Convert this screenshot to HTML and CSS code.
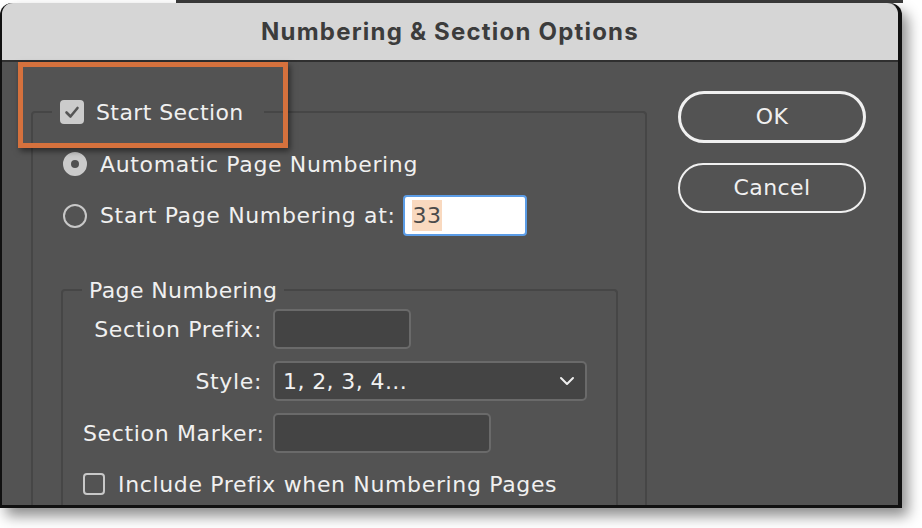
FILE: index.html
```html
<!DOCTYPE html>
<html>
<head>
<meta charset="utf-8">
<link rel="stylesheet" href="styles.css">
</head>
<body>
<div class="backdrop"></div>
<div class="window">
  <div class="titlebar">Numbering &amp; Section Options</div>
  <div class="content">
    <div class="main">
      <div class="group outer">
        <div class="legend outer-legend">
          <span class="check checked">
            <svg width="24" height="24" viewBox="0 0 24 24"><path d="M6.5 12.5 L10.5 16.5 L17.5 8" fill="none" stroke="#555" stroke-width="2.6" stroke-linecap="round" stroke-linejoin="round"/></svg>
          </span>
          <span class="legend-text">Start Section</span>
        </div>
        <div class="options">
          <div class="radio-row first">
            <span class="radio on"><span class="dot"></span></span>
            <span class="radio-label">Automatic Page Numbering</span>
          </div>
          <div class="radio-row second">
            <span class="radio"></span>
            <span class="radio-label">Start Page Numbering at:</span>
            <span class="num-input"><span class="sel">33</span></span>
          </div>
          <div class="group inner">
            <div class="legend inner-legend">Page Numbering</div>
            <div class="field-row prefix-row">
              <span class="field-label">Section Prefix:</span>
              <span class="text-box prefix-box"></span>
            </div>
            <div class="field-row">
              <span class="field-label">Style:</span>
              <span class="text-box select-box">
                <span class="select-text">1, 2, 3, 4...</span>
                <svg class="chev" width="16" height="10" viewBox="0 0 16 10"><polyline points="2,2 8,8 14,2" fill="none" stroke="#eeeeee" stroke-width="2" stroke-linecap="round" stroke-linejoin="round"/></svg>
              </span>
            </div>
            <div class="field-row">
              <span class="field-label">Section Marker:</span>
              <span class="text-box marker-box"></span>
            </div>
            <div class="check-row">
              <span class="check empty"></span>
              <span class="check-label">Include Prefix when Numbering Pages</span>
            </div>
          </div>
        </div>
      </div>
    </div>
    <div class="buttons">
      <div class="btn ok">OK</div>
      <div class="btn cancel">Cancel</div>
    </div>
  </div>
  <div class="highlight"></div>
</div>
</body>
</html>
```
FILE: styles.css
```css
html, body {
  margin: 0;
  padding: 0;
  background: #ffffff;
  width: 922px;
  height: 528px;
  overflow: hidden;
  font-family: "DejaVu Sans", Verdana, sans-serif;
}

.backdrop {
  height: 3px;
  margin-left: 176px;
  width: 727px;
  background: #3a3a3a;
}

.window {
  position: relative;
  width: 896px;
  border-left: 2px solid #111;
  border-right: 4px solid #111;
  border-bottom: 3px solid #111;
  border-radius: 12px 12px 0 0;
  background: #535353;
  box-shadow: 6px 8px 14px rgba(0, 0, 0, 0.45);
}

.titlebar {
  height: 57px;
  line-height: 57px;
  background: #d6d6d6;
  border-radius: 11px 11px 0 0;
  border-bottom: 2px solid #2f2f2f;
  text-align: center;
  font-family: Inter, "DejaVu Sans", sans-serif;
  font-weight: 700;
  font-size: 24px;
  color: #3c3c3c;
  letter-spacing: 1.2px;
}

.content {
  height: 443px;
  overflow: hidden;
  display: flex;
  align-items: flex-start;
  color: #f0f0f0;
  font-size: 22px;
  letter-spacing: 0.65px;
}

.main {
  margin-left: 29px;
  width: 616px;
}

.group {
  border: 2px solid #464646;
  border-bottom: none;
  border-radius: 4px 4px 0 0;
}

.outer {
  margin-top: 49px;
  padding-bottom: 40px;
}

.legend {
  display: flex;
  align-items: center;
  width: fit-content;
  height: 28px;
  margin-top: -15px;
  margin-left: 19px;
  background: #535353;
}

.outer-legend {
  padding: 0 20px 0 8px;
  letter-spacing: 0.4px;
}

.legend-text {
  margin-left: 12px;
}

.inner-legend {
  padding: 0 7px;
  margin-left: -1px;
  letter-spacing: 0.4px;
}

.check {
  display: block;
  box-sizing: border-box;
  border-radius: 4px;
}

.check.checked {
  width: 24px;
  height: 24px;
  background: #cbcbcb;
}

.check.checked svg {
  display: block;
}

.check.empty {
  width: 22px;
  height: 22px;
  border: 2px solid #c8c8c8;
}

.options {
  padding: 0 27px 0 28px;
}

.radio-row {
  display: flex;
  align-items: center;
}

.radio-row.first {
  margin-top: 18px;
  height: 40px;
}

.radio-row.second {
  margin-top: 11px;
  height: 41px;
}

.radio {
  box-sizing: border-box;
  width: 24px;
  height: 24px;
  margin-left: 2px;
  border-radius: 50%;
  border: 2px solid #c8c8c8;
  display: flex;
  align-items: center;
  justify-content: center;
}

.radio.on {
  background: #cbcbcb;
  border-color: #cbcbcb;
}

.radio .dot {
  width: 8px;
  height: 8px;
  border-radius: 50%;
  background: #505050;
}

.radio-label {
  margin-left: 13px;
}

.num-input {
  box-sizing: border-box;
  margin-left: 7px;
  width: 124px;
  height: 41px;
  background: #ffffff;
  border: 2px solid #5b9ce6;
  border-radius: 4px;
  display: flex;
  align-items: center;
  padding-left: 7px;
}

.sel {
  background: #f9d9bf;
  color: #4a4a4a;
  line-height: 31px;
  padding: 0 1px;
  letter-spacing: 0.4px;
}

.inner {
  margin-top: 53px;
  padding: 0 0 30px 20px;
}

.field-row {
  display: flex;
  align-items: center;
  margin-top: 12px;
}

.field-row.prefix-row {
  margin-top: 5px;
}

.field-label {
  width: 179px;
  margin-right: 11px;
  text-align: right;
  white-space: nowrap;
}

.text-box {
  box-sizing: border-box;
  height: 40px;
  background: #444444;
  border: 2px solid #6a6a6a;
  border-radius: 5px;
}

.prefix-box {
  width: 138px;
}

.marker-box {
  width: 218px;
}

.select-box {
  width: 314px;
  display: flex;
  align-items: center;
  justify-content: space-between;
  padding: 0 10px 0 8px;
}

.select-text {
  color: #f2f2f2;
  letter-spacing: 0.4px;
}

.chev {
  display: block;
}

.check-row {
  display: flex;
  align-items: center;
  height: 38px;
  margin-top: 12px;
}

.check-label {
  margin-left: 13px;
}

.buttons {
  margin-left: 31px;
  margin-top: 29px;
  width: 188px;
  display: flex;
  flex-direction: column;
  gap: 20px;
}

.btn {
  box-sizing: border-box;
  border: 2px solid #f0f0f0;
  border-radius: 26px;
  text-align: center;
  color: #f0f0f0;
  letter-spacing: 0.4px;
}

.btn.ok {
  height: 52px;
  line-height: 46px;
  border-width: 3px;
}

.btn.cancel {
  height: 50px;
  line-height: 46px;
}

.highlight {
  position: absolute;
  left: 16px;
  top: 59px;
  width: 260px;
  height: 76px;
  border: 5px solid #d5713d;
  box-shadow: 2px 3px 6px rgba(0, 0, 0, 0.5);
  pointer-events: none;
}
```
